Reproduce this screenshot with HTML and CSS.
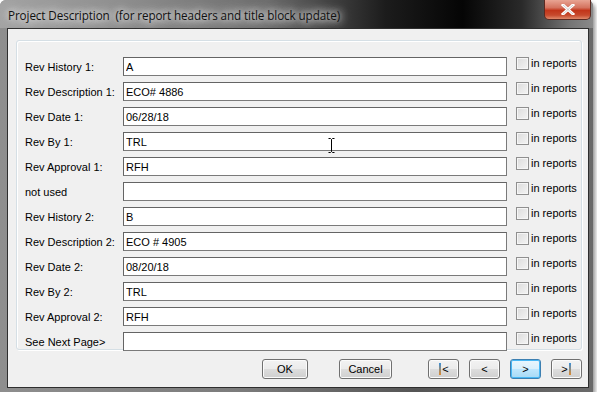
FILE: index.html
```html
<!DOCTYPE html>
<html lang="en">
<head>
  <meta charset="UTF-8">
  <title>Project Description</title>
  <link rel="stylesheet" href="styles.css">
</head>
<body>
  <div class="window">
    <div class="titlebar">
      <span class="title">Project Description&nbsp; (for report headers and title block update)</span>
      <button class="close" aria-label="Close">
        <svg width="14" height="11" viewBox="0 0 14 11"><path d="M2 1 L12 10 M12 1 L2 10" stroke="#fff" stroke-width="3" stroke-linecap="square"/><path d="M2 1 L12 10 M12 1 L2 10" stroke="#3a3a3a" stroke-width="0.6" opacity="0.4"/></svg>
      </button>
    </div>
    <div class="client">
      <div class="group">
        <div class="row"><label>Rev History 1:</label><input type="text" value="A"><span class="chk"><i></i>in reports</span></div>
        <div class="row"><label>Rev Description 1:</label><input type="text" value="ECO# 4886"><span class="chk"><i></i>in reports</span></div>
        <div class="row"><label>Rev Date 1:</label><input type="text" value="06/28/18"><span class="chk"><i></i>in reports</span></div>
        <div class="row"><label>Rev By 1:</label><input type="text" value="TRL"><span class="chk"><i></i>in reports</span></div>
        <div class="row"><label>Rev Approval 1:</label><input type="text" value="RFH"><span class="chk"><i></i>in reports</span></div>
        <div class="row"><label>not used</label><input type="text" value=""><span class="chk"><i></i>in reports</span></div>
        <div class="row"><label>Rev History 2:</label><input type="text" value="B"><span class="chk"><i></i>in reports</span></div>
        <div class="row"><label>Rev Description 2:</label><input type="text" value="ECO # 4905"><span class="chk"><i></i>in reports</span></div>
        <div class="row"><label>Rev Date 2:</label><input type="text" value="08/20/18"><span class="chk"><i></i>in reports</span></div>
        <div class="row"><label>Rev By 2:</label><input type="text" value="TRL"><span class="chk"><i></i>in reports</span></div>
        <div class="row"><label>Rev Approval 2:</label><input type="text" value="RFH"><span class="chk"><i></i>in reports</span></div>
        <div class="row"><label>See Next Page&gt;</label><input type="text" value=""><span class="chk"><i></i>in reports</span></div>
      </div>
      <div class="buttons">
        <button class="btn btn-ok">OK</button>
        <button class="btn btn-cancel">Cancel</button>
        <button class="btn nav first"><b class="bar"></b>&lt;</button>
        <button class="btn nav">&lt;</button>
        <button class="btn nav focus">&gt;</button>
        <button class="btn nav last">&gt;<b class="bar"></b></button>
      </div>
    </div>
    <svg class="ibeam" width="7" height="15" viewBox="0 0 7 15"><path d="M0.5 0.5 H2.5 L3.5 1.5 L4.5 0.5 H6.5 M3.5 1.5 V13.5 M0.5 14.5 H2.5 L3.5 13.5 L4.5 14.5 H6.5" fill="none" stroke="#000" stroke-width="1"/></svg>
  </div>
</body>
</html>
```

FILE: styles.css
```css
/* dialog frame */
body { margin: 0; background: #fff; font-family: "Liberation Sans", Arial, sans-serif; }
.window { position: relative; width: 593px; height: 392px; background: linear-gradient(90deg, #8e8e8e 0%, #7c7c7c 40%, #555 70%, #6a6a6a 100%); box-shadow: 2px 3px 4px rgba(0,0,0,0.45); border-radius: 6px 6px 0 0; }
.titlebar { height: 28px; display: flex; align-items: flex-start; position: relative; border-radius: 6px 6px 0 0;
  background: linear-gradient(90deg, #a3a3a3 0%, #8f8f8f 20%, #6d6d6d 45%, #1c1c1c 65%, #050505 78%, #2a2a2a 88%, #747474 96%, #8a8a8a 100%); }
.title { margin: 7px 0 0 8px; font-family: "Open Sans", "Noto Sans", sans-serif; font-size: 11.7px; color: #111; letter-spacing: -0.1px;
  text-shadow: 0 0 6px #e8e8e8, 0 0 10px #e0e0e0, 0 0 14px #d8d8d8; white-space: nowrap; }
.close { position: absolute; right: 2px; top: 0; width: 47px; height: 20px; border: 1px solid #5b2a22; border-top: none; border-radius: 0 0 5px 5px; padding: 0;
  background: linear-gradient(180deg, #e8a493 0%, #d4735f 40%, #c2351a 55%, #c74a2d 80%, #e08a6b 100%); display: flex; align-items: center; justify-content: center; }

/* client area */
.client { margin-left: 7px; width: 580px; height: 358px; border: 1px solid #2e2e2e; background: #f0f0f0; }
.group { margin: 11px 0 0 8px; width: 566px; height: 310px; border: 1px solid #d5dfe5; border-radius: 3px; box-shadow: inset 1px 1px 0 #fff, 1px 1px 0 #fff; padding-top: 13px; box-sizing: border-box; }
.row { display: flex; align-items: center; height: 25px; }
.row label { width: 98px; margin-left: 8px; font-size: 11px; color: #000; }
.row input { width: 384px; height: 19px; box-sizing: border-box; margin: 0; border: 1px solid #7a7a7a; border-top-color: #646464; border-left-color: #646464; padding: 1px 2px 0; font-family: "Liberation Sans", Arial, sans-serif; font-size: 11px; color: #000; background: #fff; }
.chk { display: flex; align-items: flex-start; margin-left: 9px; font-size: 11px; color: #000; height: 19px; }
.chk i { display: block; width: 11px; height: 11px; border: 1px solid #8f8f8f; margin-right: 2px; margin-top: 0; background: linear-gradient(135deg, #dcdcdc, #f4f4f4); box-shadow: inset 0 0 0 1px #f6f6f6; }

/* buttons */
.buttons { display: flex; margin-top: 9px; }
.btn { height: 20px; padding: 0; border: 1px solid #707070; border-radius: 3px; font-family: "Liberation Sans", Arial, sans-serif; font-size: 11px; color: #000;
  background: linear-gradient(180deg, #f2f2f2 0%, #ebebeb 50%, #dddddd 51%, #cfcfcf 100%); box-shadow: inset 0 0 0 1px #fbfbfb; display: flex; align-items: center; justify-content: center; }
.btn-ok { width: 46px; margin-left: 254px; }
.btn-cancel { width: 53px; margin-left: 31px; }
.nav { width: 31px; margin-left: 10px; }
.nav.first { margin-left: 36px; }
.nav.focus { border-color: #3c7fb1; background: linear-gradient(180deg, #eaf6fd 0%, #d9f0fc 50%, #bee6fd 51%, #a7d9f5 100%); box-shadow: inset 0 0 0 1px #48b8f5; }
.bar { display: inline-block; width: 2px; height: 12px; background: linear-gradient(180deg, #3a8fd8, #e08a2c); margin: 0 1px; }
.ibeam { position: absolute; left: 328px; top: 138px; }
```
